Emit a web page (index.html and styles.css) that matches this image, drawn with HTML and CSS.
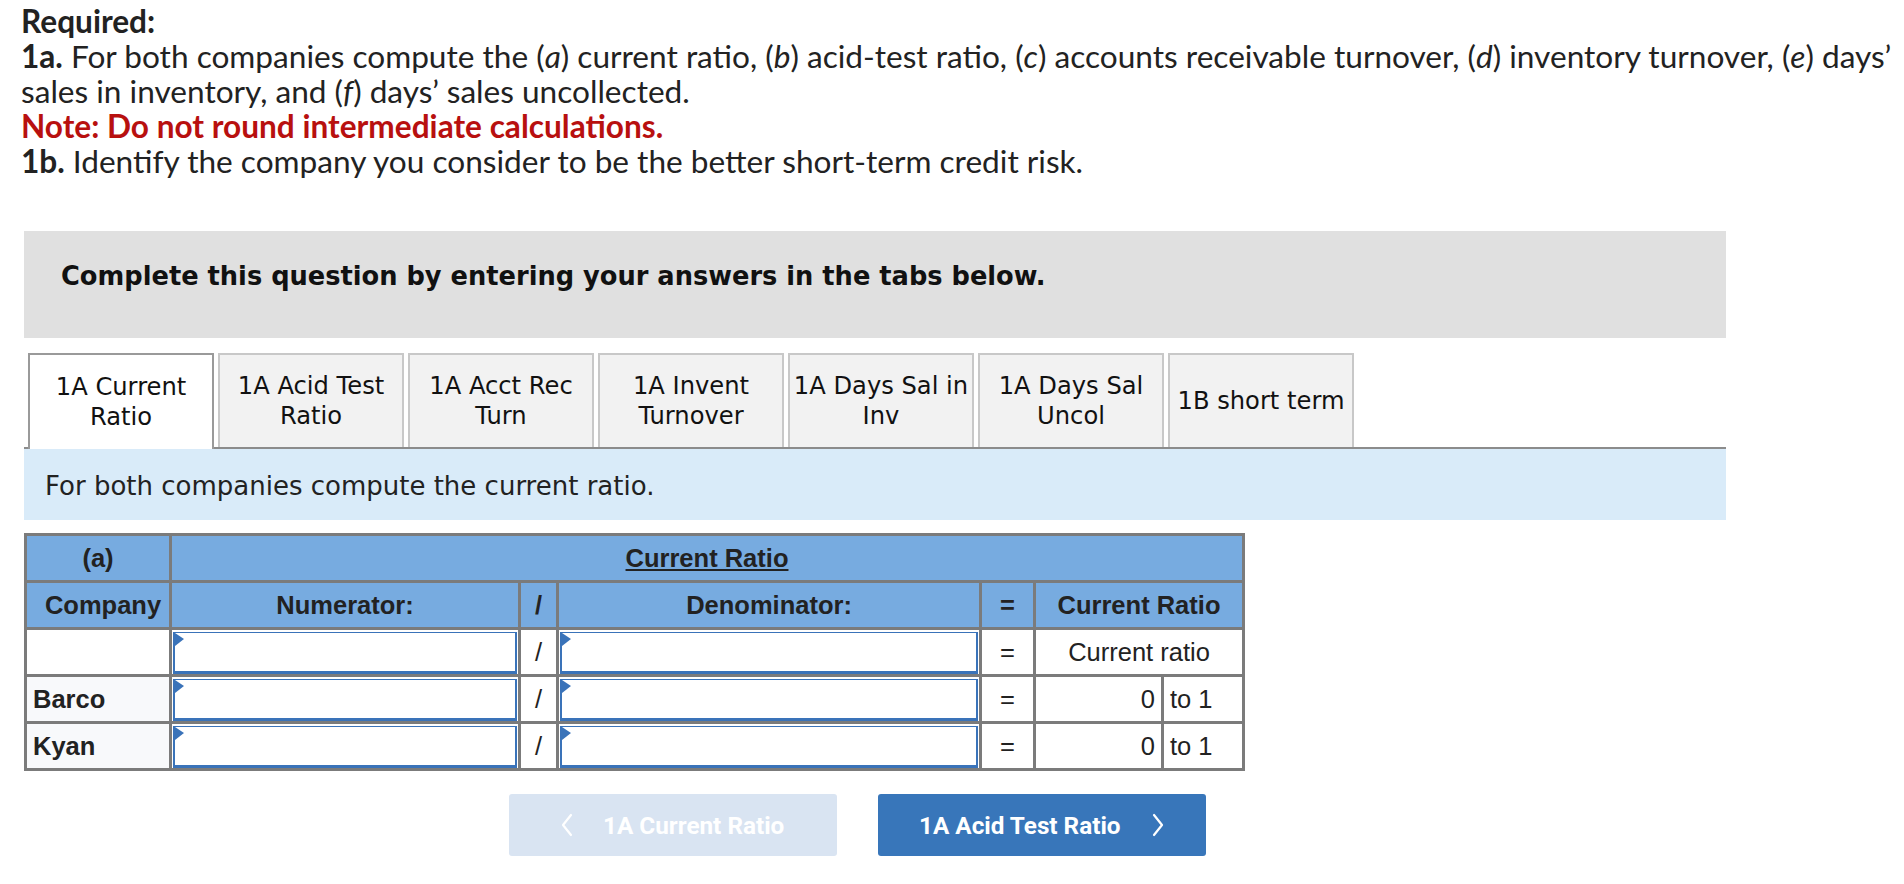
FILE: index.html
```html
<!DOCTYPE html>
<html>
<head>
<meta charset="utf-8">
<link rel="stylesheet" href="styles.css">
</head>
<body>
<div class="instructions">
  <div class="line"><b>Required:</b></div>
  <div class="line"><b>1a.</b> For both companies compute the (<i>a</i>) current ratio, (<i>b</i>) acid-test ratio, (<i>c</i>) accounts receivable turnover, (<i>d</i>) inventory turnover, (<i>e</i>) days’</div>
  <div class="line">sales in inventory, and (<i>f</i>) days’ sales uncollected.</div>
  <div class="line note">Note: Do not round intermediate calculations.</div>
  <div class="line"><b>1b.</b> Identify the company you consider to be the better short-term credit risk.</div>
</div>

<div class="panel">
  <div class="banner">Complete this question by entering your answers in the tabs below.</div>

  <div class="tabs">
    <div class="tab active">1A Current<br>Ratio</div>
    <div class="tab">1A Acid Test<br>Ratio</div>
    <div class="tab">1A Acct Rec<br>Turn</div>
    <div class="tab">1A Invent<br>Turnover</div>
    <div class="tab">1A Days Sal in<br>Inv</div>
    <div class="tab">1A Days Sal<br>Uncol</div>
    <div class="tab">1B short term</div>
  </div>

  <div class="info">For both companies compute the current ratio.</div>

  <table class="grid">
    <colgroup>
      <col class="c-company"><col class="c-num"><col class="c-op"><col class="c-den"><col class="c-eq"><col class="c-val"><col class="c-unit">
    </colgroup>
    <tr class="head">
      <td>(a)</td>
      <td colspan="6"><u>Current Ratio</u></td>
    </tr>
    <tr class="head">
      <td class="company-h">Company</td>
      <td>Numerator:</td>
      <td>/</td>
      <td>Denominator:</td>
      <td>=</td>
      <td colspan="2">Current Ratio</td>
    </tr>
    <tr>
      <td class="company blank"></td>
      <td class="in"><div class="field"><span class="flag"></span></div></td>
      <td class="op">/</td>
      <td class="in"><div class="field"><span class="flag"></span></div></td>
      <td class="op">=</td>
      <td class="label" colspan="2">Current ratio</td>
    </tr>
    <tr>
      <td class="company">Barco</td>
      <td class="in"><div class="field"><span class="flag"></span></div></td>
      <td class="op">/</td>
      <td class="in"><div class="field"><span class="flag"></span></div></td>
      <td class="op">=</td>
      <td class="val">0</td>
      <td class="unit">to 1</td>
    </tr>
    <tr>
      <td class="company">Kyan</td>
      <td class="in"><div class="field"><span class="flag"></span></div></td>
      <td class="op">/</td>
      <td class="in"><div class="field"><span class="flag"></span></div></td>
      <td class="op">=</td>
      <td class="val">0</td>
      <td class="unit">to 1</td>
    </tr>
  </table>

  <div class="nav">
    <div class="btn prev">
      <svg class="chev" width="14" height="26" viewBox="0 0 14 26"><path d="M11 3 L3 13 L11 23" fill="none" stroke="#fff" stroke-width="2.2" stroke-linecap="round" stroke-linejoin="round"/></svg>
      <span class="btn-text">1A Current Ratio</span>
    </div>
    <div class="btn next">
      <span class="btn-text">1A Acid Test Ratio</span>
      <svg class="chev" width="14" height="26" viewBox="0 0 14 26"><path d="M3 3 L11 13 L3 23" fill="none" stroke="#fff" stroke-width="2.2" stroke-linecap="round" stroke-linejoin="round"/></svg>
    </div>
  </div>
</div>
</body>
</html>
```

FILE: styles.css
```css
html, body {
  margin: 0;
  padding: 0;
  background: #fff;
}

body {
  padding-top: 4px;
  color: #222;
}

.instructions {
  padding-left: 21px;
  font-family: Lato, "Open Sans", sans-serif;
  font-size: 31.6px;
  line-height: 35px;
  color: #222;
  white-space: nowrap;
}

.instructions b {
  font-weight: 700;
}

.note {
  color: #b8100f;
  font-weight: 700;
}

.panel {
  margin-left: 24px;
  width: 1702px;
  margin-top: 52px;
}

.banner {
  background: #e0e0e0;
  height: 107px;
  box-sizing: border-box;
  padding: 30px 0 0 37px;
  font-family: "DejaVu Sans", Verdana, sans-serif;
  font-weight: bold;
  font-size: 25.7px;
  line-height: 30px;
  color: #111;
  white-space: nowrap;
}

.tabs {
  margin-top: 15px;
  display: flex;
  gap: 4px;
  padding-left: 4px;
  border-bottom: 2px solid #8c8c8c;
  height: 94px;
}

.tab {
  width: 186px;
  height: 94px;
  box-sizing: border-box;
  border: 2px solid #c8c8c8;
  border-bottom: none;
  background: #f2f2f2;
  display: flex;
  align-items: center;
  justify-content: center;
  text-align: center;
  font-family: "DejaVu Sans", Verdana, sans-serif;
  font-size: 24.2px;
  line-height: 30px;
  color: #111;
  white-space: nowrap;
}

.tab.active {
  background: #fff;
  border-color: #9a9a9a;
  height: 96px;
  position: relative;
  z-index: 1;
}

.info {
  background: #d9ebf9;
  height: 71px;
  box-sizing: border-box;
  padding: 22px 0 0 21px;
  font-family: "DejaVu Sans", Verdana, sans-serif;
  font-size: 26px;
  line-height: 30px;
  color: #222;
}

.grid {
  margin-top: 13px;
  border-collapse: collapse;
  width: 1218px;
  table-layout: fixed;
  font-family: "Liberation Sans", Arial, sans-serif;
  font-size: 25.5px;
  color: #222;
}

.c-company { width: 145px; }
.c-num { width: 349px; }
.c-op { width: 38px; }
.c-den { width: 423px; }
.c-eq { width: 54px; }
.c-val { width: 128px; }
.c-unit { width: 81px; }

.grid td {
  border: 3px solid #7b7b7b;
  height: 44px;
  padding: 0;
  text-align: center;
  vertical-align: middle;
  box-sizing: border-box;
}

.grid tr {
  height: 47px;
}

.head td {
  background: #77abe0;
  font-weight: bold;
}

.head td.company-h {
  padding-left: 10px;
}

.company {
  text-align: left !important;
  padding-left: 6px !important;
  font-weight: bold;
  background: #f8f9fb;
}

.company.blank {
  background: #fff;
}

.grid td.in {
  padding: 1px 1px 0 1px;
}

.field {
  position: relative;
  height: 42px;
  box-sizing: border-box;
  border: 2px solid #3a73b9;
  border-top-width: 1px;
  border-bottom-width: 3px;
  background: #fff;
}

.flag {
  position: absolute;
  left: 0;
  top: 0;
  width: 0;
  height: 0;
  border-left: 9px solid #3a73b9;
  border-top: 6px solid transparent;
  border-bottom: 7px solid transparent;
}

.op {
  font-weight: normal;
}

.label {
  font-weight: normal;
}

.grid td.val {
  text-align: right;
  padding-right: 6px;
}

.grid td.unit {
  text-align: left;
  padding-left: 6px;
  border-left-width: 2px;
}

.nav {
  margin-top: 23px;
  display: flex;
  gap: 41px;
  padding-left: 485px;
}

.btn {
  width: 328px;
  height: 62px;
  border-radius: 3px;
  display: flex;
  align-items: center;
  font-family: Roboto, "Liberation Sans", sans-serif;
  font-weight: bold;
  font-size: 24.3px;
  color: #fff;
  box-sizing: border-box;
  white-space: nowrap;
}

.btn.prev {
  background: #d9e4f2;
  padding-left: 51px;
  gap: 29px;
}

.btn.next {
  background: #3876ba;
  padding-left: 41px;
  gap: 30px;
}
```
